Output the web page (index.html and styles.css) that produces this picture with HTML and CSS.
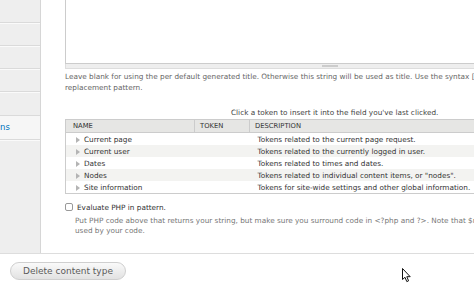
FILE: index.html
```html
<!DOCTYPE html>
<html>
<head>
<meta charset="utf-8">
<title>Edit content type</title>
<link rel="stylesheet" href="styles.css">
</head>
<body>
<div class="layout">
  <div class="sidebar">
    <div class="item"></div>
    <div class="item"></div>
    <div class="item"></div>
    <div class="item"></div>
    <div class="item"></div>
    <div class="item active">ns</div>
  </div>
  <div class="main">
    <div class="textarea"></div>
    <div class="grippie"><span class="grip"></span></div>
    <div class="desc">Leave blank for using the per default generated title. Otherwise this string will be used as title. Use the syntax [token] if you want to insert a<br>replacement pattern.</div>
    <div class="hint">Click a token to insert it into the field you've last clicked.</div>
    <table class="tokens">
      <thead>
        <tr><th class="c-name">Name</th><th class="c-token">Token</th><th class="c-desc">Description</th></tr>
      </thead>
      <tbody>
        <tr><td class="c-name"><span class="arrow"></span>Current page</td><td></td><td class="c-desc">Tokens related to the current page request.</td></tr>
        <tr class="even"><td class="c-name"><span class="arrow"></span>Current user</td><td></td><td class="c-desc">Tokens related to the currently logged in user.</td></tr>
        <tr><td class="c-name"><span class="arrow"></span>Dates</td><td></td><td class="c-desc">Tokens related to times and dates.</td></tr>
        <tr class="even"><td class="c-name"><span class="arrow"></span>Nodes</td><td></td><td class="c-desc">Tokens related to individual content items, or "nodes".</td></tr>
        <tr><td class="c-name"><span class="arrow"></span>Site information</td><td></td><td class="c-desc">Tokens for site-wide settings and other global information.</td></tr>
      </tbody>
    </table>
    <div class="check">
      <span class="box"></span><span>Evaluate PHP in pattern.</span>
    </div>
    <div class="check-desc">Put PHP code above that returns your string, but make sure you surround code in &lt;?php and ?&gt;. Note that $node will be available and can be<br>used by your code.</div>
  </div>
</div>
<div class="actions">
  <button class="btn">Delete content type</button>
  <svg class="cursor" width="10" height="15" viewBox="0 0 10 15"><path d="M0.5 0.5 L0.5 11.5 L3 9.3 L4.8 13.6 L6.6 12.8 L4.8 8.7 L8.2 8.7 Z" fill="#fff" stroke="#111" stroke-width="1"/></svg>
</div>
</body>
</html>
```
FILE: styles.css
```css
body{margin:0;padding:0;overflow:hidden;background:#fff;font-family:'DejaVu Sans',Verdana,sans-serif;font-size:7.3px;color:#333;}
.layout{display:flex;height:253px;border-bottom:1px solid #ddd;overflow:hidden;}
.sidebar{width:40px;flex:none;background:#eee;border-right:1px solid #d6d6d6;}
.item{height:22px;border-bottom:1px solid #dadada;box-shadow:0 1px 0 #fafafa;line-height:22px;font-size:8.5px;color:#0074bd;}
.item:nth-child(5){height:23px;}
.item:nth-child(6){height:23px;}
.active{background:#f6f6f6;}
.main{flex:none;width:700px;padding-left:24px;}
.textarea{width:528px;height:63px;border:1px solid #ccc;border-top:none;}
.grippie{width:528px;height:4px;background:#eee;border:1px solid #ddd;border-top:none;display:flex;justify-content:center;align-items:center;}
.grip{width:16px;height:0;border-top:1px solid #ccc;border-bottom:1px solid #ccc;}
.desc{margin-top:3px;line-height:10.5px;color:#666;white-space:nowrap;}
.hint{margin-top:15px;padding-left:166px;line-height:10px;color:#444;white-space:nowrap;}
.tokens{width:530px;border-collapse:collapse;border:1px solid #ccc;margin-top:1px;}
.tokens th{height:12px;padding:0 0 0 5px;background:#e6e6e4;border:1px solid #ccc;text-align:left;font-weight:normal;text-transform:uppercase;font-size:6.8px;color:#333;}
.tokens th.c-name{width:121px;padding-left:7px;}
.tokens th.c-token{width:49px;}
.tokens td{height:12px;padding:0;white-space:nowrap;color:#333;}
.tokens td.c-name{padding-left:10px;}
.tokens td.c-desc{padding-left:8px;}
.tokens tr.even td{background:#f3f3f1;}
.arrow{display:inline-block;width:0;height:0;border-left:4px solid #b4b4b4;border-top:3px solid transparent;border-bottom:3px solid transparent;margin-right:4px;vertical-align:-1px;}
.check{display:flex;align-items:center;margin-top:8px;height:10px;}
.box{width:6px;height:6px;border:1px solid #999;border-radius:2px;background:#fff;margin-right:4px;}
.check-desc{margin-top:4px;padding-left:10px;line-height:10px;color:#777;white-space:nowrap;}
.actions{display:flex;align-items:flex-start;padding:8px 0 0 10px;height:40px;}
.btn{width:116px;height:18px;padding:0;border:1px solid #cfcfcf;border-radius:9px;background:linear-gradient(#fafafa,#e2e2e2);font-family:'DejaVu Sans',Verdana,sans-serif;font-size:9px;color:#5a5a5a;}
.cursor{margin:6px 0 0 276px;}
```
